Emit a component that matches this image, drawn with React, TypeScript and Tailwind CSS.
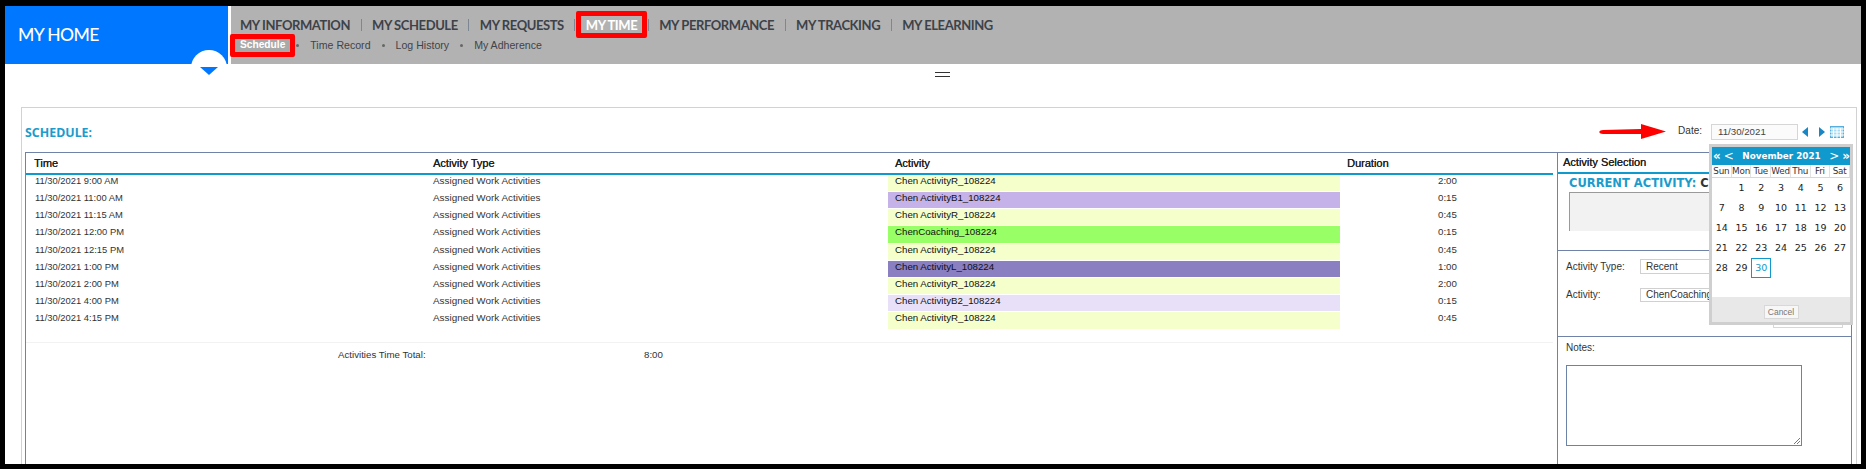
import React from "react";

const ARIAL = "font-['Liberation_Sans',Arial,sans-serif]";
const MENU = ["MY INFORMATION", "MY SCHEDULE", "MY REQUESTS", "MY TIME", "MY PERFORMANCE", "MY TRACKING", "MY ELEARNING"];
const SUB = ["Schedule", "Time Record", "Log History", "My Adherence"];
const ROWS = [
  { t: "11/30/2021 9:00 AM", a: "Chen ActivityR_108224", d: "2:00", c: "bg-[#f5ffcc]", h: "h-[17px]" },
  { t: "11/30/2021 11:00 AM", a: "Chen ActivityB1_108224", d: "0:15", c: "bg-[#c4b2e8]", h: "h-[17px]" },
  { t: "11/30/2021 11:15 AM", a: "Chen ActivityR_108224", d: "0:45", c: "bg-[#f5ffcc]", h: "h-[17px]" },
  { t: "11/30/2021 12:00 PM", a: "ChenCoaching_108224", d: "0:15", c: "bg-[#99ff66]", h: "h-[18px]" },
  { t: "11/30/2021 12:15 PM", a: "Chen ActivityR_108224", d: "0:45", c: "bg-[#f5ffcc]", h: "h-[17px]" },
  { t: "11/30/2021 1:00 PM", a: "Chen ActivityL_108224", d: "1:00", c: "bg-[#8a7fc1]", h: "h-[17px]" },
  { t: "11/30/2021 2:00 PM", a: "Chen ActivityR_108224", d: "2:00", c: "bg-[#f5ffcc]", h: "h-[17px]" },
  { t: "11/30/2021 4:00 PM", a: "Chen ActivityB2_108224", d: "0:15", c: "bg-[#e8e0f8]", h: "h-[17px]" },
  { t: "11/30/2021 4:15 PM", a: "Chen ActivityR_108224", d: "0:45", c: "bg-[#f5ffcc]", h: "h-[18px]" },
];
const COLS = "grid grid-cols-[399px_463px_452px_1fr]";
const DAYS = ["Sun", "Mon", "Tue", "Wed", "Thu", "Fri", "Sat"];
const CELLS = ["", "1", "2", "3", "4", "5", "6", "7", "8", "9", "10", "11", "12", "13", "14", "15", "16", "17", "18", "19", "20", "21", "22", "23", "24", "25", "26", "27", "28", "29", "30"];

function Calendar() {
  return (
    <div className="absolute left-[151px] top-[-9px] z-10 flex h-[181px] w-[144px] flex-col border-[3px] border-[#cfcfcf] bg-white font-['DejaVu_Sans',sans-serif] text-[#222]">
      <div className="flex h-[18px] shrink-0 items-center justify-between bg-[#0f99cc] text-white">
        <span className="flex items-center gap-[3px] pl-[1px] text-[12px] font-bold leading-none">
          <span>«</span>
          <span className="font-normal">&lt;</span>
        </span>
        <span className="text-[8.8px] font-bold leading-none">November 2021</span>
        <span className="flex items-center gap-[3px] text-[12px] font-bold leading-none">
          <span className="font-normal">&gt;</span>
          <span>»</span>
        </span>
      </div>
      <div className="grid h-[13px] shrink-0 grid-cols-7 border-b border-[#d8d8d8]">
        {DAYS.map((d) => (
          <div key={d} className="flex items-center justify-center border-r border-[#e2e2e2] text-[8.8px] leading-none tracking-[-0.2px] text-[#333]">
            {d}
          </div>
        ))}
      </div>
      <div className="grid flex-1 grid-cols-7 auto-rows-[20px] content-start">
        {CELLS.map((c, i) => (
          <div
            key={i}
            className={
              "flex items-center justify-center text-[9.5px] leading-none " +
              (c === "30" ? "border border-[#0f99cc] text-[#0f99cc]" : "")
            }
          >
            {c}
          </div>
        ))}
      </div>
      <div className="flex h-[25px] shrink-0 items-end justify-center bg-[#e8e8e8] pb-[3px]">
        <div className={`flex h-[14px] w-[35px] items-center justify-center border border-[#d8d8d8] bg-[#f7f7f7] text-[8.5px] leading-none text-[#777] ${ARIAL}`}>
          Cancel
        </div>
      </div>
    </div>
  );
}

export default function App() {
  return (
    <div className={`relative box-border flex h-[469px] w-[1866px] flex-col overflow-hidden border-x-[5px] border-b-[5px] border-t-[6px] border-black bg-white ${ARIAL}`}>
      <header className="flex h-[58px] shrink-0">
        <div className="relative flex w-[223px] shrink-0 items-center bg-[#0077ff] pl-[13px]">
          <span className="font-['Lato',sans-serif] text-[17.5px] font-medium leading-none tracking-[-0.6px] text-white">MY HOME</span>
          <div className="absolute left-[186px] top-[44px] h-[36px] w-[36px] rounded-full bg-white" />
          <div className="absolute left-[195px] top-[61px] z-[1] h-0 w-0 border-x-[9px] border-t-[8px] border-x-transparent border-t-[#0077ff]" />
        </div>
        <div className="w-[3px] shrink-0 bg-white" />
        <nav className="flex flex-1 flex-col bg-[#b2b2b2] pl-[9px]">
          <ul className="mt-[11px] flex h-[16px] items-center font-['Lato',sans-serif] text-[13px] font-bold leading-none tracking-[-0.42px] text-[#3d4249]">
            {MENU.map((m, i) => (
              <li key={m} className="flex items-center">
                {i > 0 && <span className="mx-[10.5px] h-[12px] w-px bg-[#7d8791]" />}
                <span className={m === "MY TIME" ? "relative text-white" : ""}>
                  {m}
                  {m === "MY TIME" && <span className="absolute inset-x-[-10px] top-[-8px] bottom-[-6px] rounded-[2px] border-[5px] border-[#ff0000]" />}
                </span>
              </li>
            ))}
          </ul>
          <ul className="mt-[5px] flex h-[14px] items-center text-[10.6px] leading-none text-[#3f444a]">
            {SUB.map((s, i) => (
              <li key={s} className="flex items-center">
                {i > 0 && <span className="mx-[11px] h-[3px] w-[3px] rounded-full bg-[#666]" />}
                <span className={s === "Schedule" ? "relative isolate text-[10.2px] font-bold text-white" : ""}>
                  {s}
                  {s === "Schedule" && <span className="absolute inset-x-[-10px] top-[-6px] bottom-[-7px] -z-10 rounded-[2px] border-[5px] border-[#ff0000] bg-[#a9a9a9]" />}
                </span>
              </li>
            ))}
          </ul>
        </nav>
      </header>

      <main className="flex min-h-0 flex-1 flex-col">
        <div className="flex h-[43px] shrink-0 justify-center pt-[8px]">
          <div className="ml-[19px] h-[5px] w-[15px] border-y border-[#333]" />
        </div>
        <section className="ml-[16px] mr-[4px] flex min-h-0 flex-1 flex-col border border-b-0 border-[#d2d2d2]">
          <div className="flex h-[44px] shrink-0 items-end justify-between pb-[3px] pl-[3px] pr-[12px]">
            <h2 className="mb-[10px] font-['Noto_Sans',sans-serif] text-[12.4px] font-bold leading-none text-[#1b9ccc]">SCHEDULE:</h2>
            <div className="relative mb-[9px] flex items-center">
              <svg className="absolute left-[-79px] top-[0px]" width="68" height="16" viewBox="0 0 68 16">
                <path d="M0 8 Q1 6 4 6 L42 5 L42 0 L67 7.5 L42 15 L42 10 L4 10 Q1 10 0 8 Z" fill="#ff0000" />
              </svg>
              <span className="mb-[3px] mr-[9px] text-[10px] leading-none text-[#333]">Date:</span>
              <div className="flex h-[16px] w-[87px] items-center border border-[#d6d6d6] bg-[#fbfbfb] pl-[6px] text-[9.7px] leading-none text-[#444]">11/30/2021</div>
              <svg className="ml-[4px]" width="7" height="10" viewBox="0 0 7 10"><path d="M6 0 L0 5 L6 10 Z" fill="#1b86c4" /></svg>
              <svg className="ml-[9px]" width="7" height="10" viewBox="0 0 7 10"><path d="M1 0 L7 5 L1 10 Z" fill="#1b86c4" /></svg>
              <svg className="ml-[5px]" width="14" height="12" viewBox="0 0 14 12">
                <rect x="0.5" y="0.5" width="13" height="11" fill="#a8dcf4" stroke="#55aede" />
                <path d="M0 3 H14 M0 6 H14 M0 9 H14 M3.5 2 V12 M7 2 V12 M10.5 2 V12" stroke="#ffffff" strokeWidth="1" />
              </svg>
            </div>
          </div>

          <div className="ml-[3px] mr-[4px] flex min-h-0 flex-1 border border-b-0 border-[#7082a8]">
            <div className="flex w-[1531px] shrink-0 flex-col pr-[4px] text-[9.7px] leading-none text-[#333]">
              <div className={`${COLS} h-[22px] shrink-0 items-center border-b-2 border-[#0f99cc] text-[11px] font-normal text-[#222] [text-shadow:0.2px_0_0_#222]`}>
                <div className="pl-[8px]">Time</div>
                <div className="pl-[8px]">Activity Type</div>
                <div className="pl-[7px]">Activity</div>
                <div className="pl-[7px]">Duration</div>
              </div>
              {ROWS.map((r, i) => (
                <div key={i} className={`${COLS} ${r.h} shrink-0`}>
                  <div className="pl-[9px] pt-[1px] text-[9.4px]">{r.t}</div>
                  <div className="pl-[8px] pt-[1px] text-[9.9px]">Assigned Work Activities</div>
                  <div className={`mb-[1px] pl-[7px] pt-[1px] text-[#111] ${r.c}`}>{r.a}</div>
                  <div className="pl-[98px] pt-[1px]">{r.d}</div>
                </div>
              ))}
              <div className="mt-[12px] flex h-[30px] shrink-0 items-center border-t border-[#f2f2f2] pb-[6px]">
                <span className="ml-[312px] w-[306px]">Activities Time Total:</span>
                <span>8:00</span>
              </div>
            </div>

            <aside className="relative flex min-w-0 flex-1 flex-col border-l border-[#7082a8] text-[10px] leading-none text-[#333]">
              <Calendar />
              <div className="flex h-[21px] shrink-0 items-center border-b-2 border-[#0f99cc] pl-[5px] text-[11px] text-[#222] [text-shadow:0.2px_0_0_#222]">Activity Selection</div>
              <div className="flex h-[77px] shrink-0 flex-col border-b border-[#7082a8] pl-[11px] pt-[3px]">
                <div className="whitespace-nowrap font-['DejaVu_Sans',sans-serif] text-[11.5px] font-bold leading-[13px] text-[#1b9ccc]">
                  CURRENT ACTIVITY: <span className="text-[#333]">C</span>
                </div>
                <div className="mt-[2px] h-[39px] w-[240px] border-l border-t border-[#9a9a9a] bg-[#f2f2f2]" />
              </div>
              <div className="flex h-[86px] shrink-0 flex-col border-b border-[#7082a8] pl-[8px] pr-[8px] pt-[8px]">
                <div className="grid grid-cols-[74px_1fr] items-center">
                  <span>Activity Type:</span>
                  <div className="flex h-[15px] items-center border border-[#d0d0d0] pl-[5px]">Recent</div>
                </div>
                <div className="mt-[14px] grid grid-cols-[74px_1fr] items-center">
                  <span>Activity:</span>
                  <div className="flex h-[14px] items-center border border-[#d0d0d0] pl-[5px]">ChenCoaching_108224</div>
                </div>
                <div className="ml-auto mt-[6px] h-[20px] w-[70px] border border-[#d8d8d8]" />
              </div>
              <div className="flex min-h-0 flex-1 flex-col pl-[8px] pt-[6px]">
                <span>Notes:</span>
                <div className="relative mt-[12px] h-[81px] w-[236px] border border-[#6c83a8]">
                  <svg className="absolute bottom-0 right-0" width="8" height="8" viewBox="0 0 8 8">
                    <path d="M1 7 L7 1 M4 7 L7 4" stroke="#555" strokeWidth="0.8" />
                  </svg>
                </div>
              </div>
            </aside>
          </div>
        </section>
      </main>
    </div>
  );
}
